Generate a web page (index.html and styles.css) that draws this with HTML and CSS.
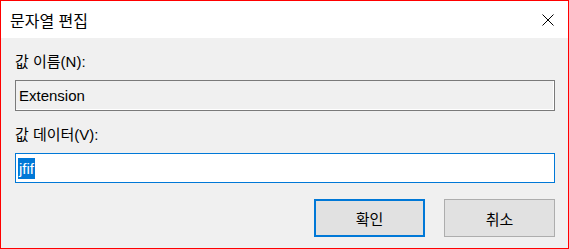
FILE: index.html
```html
<!DOCTYPE html>
<html lang="ko">
<head>
  <meta charset="UTF-8" />
  <title>문자열 편집</title>
  <link rel="stylesheet" href="styles.css">
</head>
<body>
  <div class="dialog">
    <div class="titlebar">
      <span class="title">문자열 편집</span>
      <span class="close">
        <svg width="12" height="12" viewBox="0 0 12 12">
          <path d="M0.5 0.5 L11.5 11.5 M11.5 0.5 L0.5 11.5" stroke="#000" stroke-width="1" fill="none" />
        </svg>
      </span>
    </div>
    <div class="content">
      <div class="label">값 이름(N):</div>
      <div class="field readonly">Extension</div>
      <div class="label second">값 데이터(V):</div>
      <div class="field active"><span class="selected">jfif</span></div>
      <div class="buttons">
        <button class="btn default">확인</button>
        <button class="btn">취소</button>
      </div>
    </div>
  </div>
</body>
</html>
```

FILE: styles.css
```css
body {
  margin: 0;
  font-family: "Liberation Sans", "Noto Sans CJK KR", sans-serif;
  font-size: 15px;
  color: #000;
}
.dialog {
  width: 569px;
  height: 249px;
  box-sizing: border-box;
  border: 1px solid #ff0000;
  background: #f0f0f0;
  display: flex;
  flex-direction: column;
}
.titlebar {
  height: 37px;
  background: #fff;
  display: flex;
  align-items: center;
  justify-content: space-between;
  padding: 0 14px 0 9px;
}
.title {
  font-size: 16px;
}
.close {
  display: flex;
  width: 12px;
  height: 12px;
}
.content {
  padding: 14px 13px 0 14px;
}
.label {
  line-height: 20px;
  height: 20px;
}
.label.second {
  margin-top: 14px;
}
.field {
  height: 31px;
  box-sizing: border-box;
  margin-top: 8px;
  padding: 0 3px;
  display: flex;
  align-items: center;
}
.field.readonly {
  border: 1px solid #7a7a7a;
  box-shadow: inset -1px -1px 0 #fff;
}
.field.active {
  height: 30px;
  background: #fff;
  border: 1px solid #0078d7;
  padding-left: 2px;
}
.selected {
  background: #0078d7;
  color: #fff;
  line-height: 21px;
  padding: 0 1px;
}
.buttons {
  display: flex;
  justify-content: flex-end;
  gap: 19px;
  margin-top: 16px;
}
.btn {
  width: 111px;
  height: 38px;
  box-sizing: border-box;
  background: #e1e1e1;
  border: 1px solid #adadad;
  font-family: inherit;
  font-size: 15px;
  color: #000;
  padding: 0;
}
.btn.default {
  border: 2px solid #0078d7;
}
```
